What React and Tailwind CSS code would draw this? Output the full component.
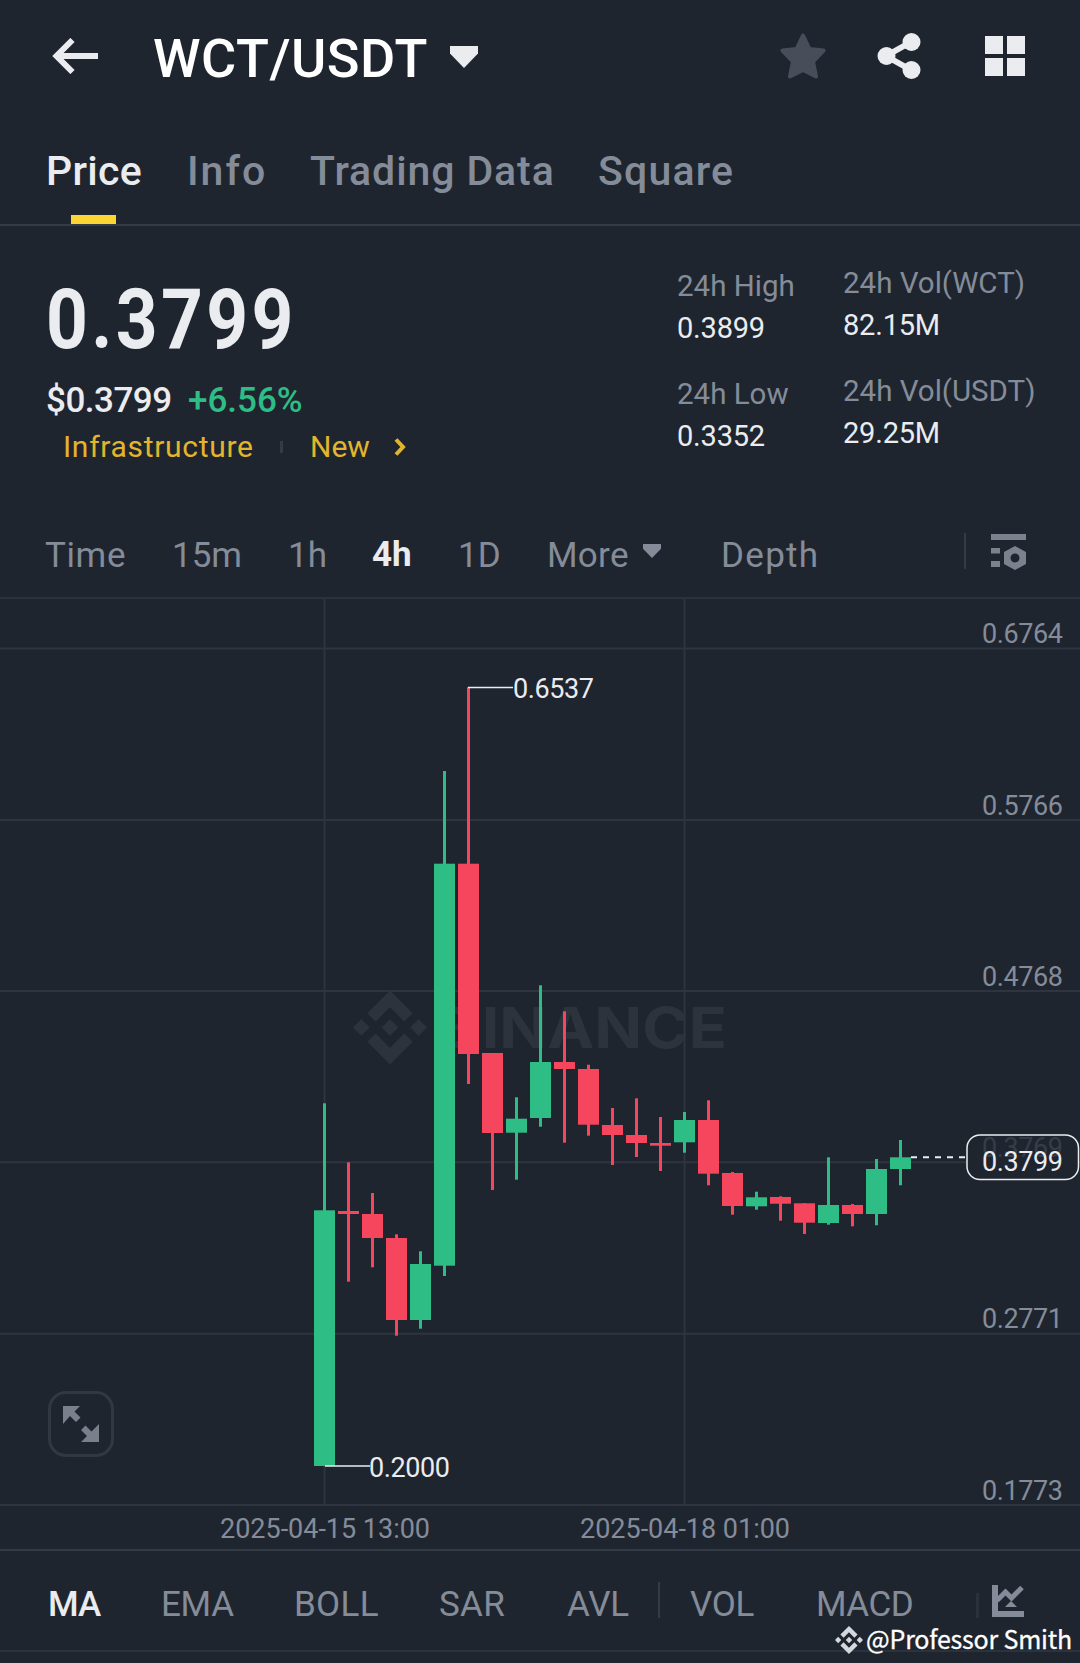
import { SiBinance } from "react-icons/si";

const UP = "#2ebd85";
const DOWN = "#f6465d";

// [high, bodyTop, bodyBottom, low, rising]
const candles = [
  [1103.3, 1210.3, 1466, 1466, true],
  [1162.3, 1211, 1214, 1281.7, false],
  [1193, 1214, 1238, 1267.3, false],
  [1234.3, 1238, 1320, 1335.7, false],
  [1251.3, 1264, 1320, 1328.7, true],
  [771, 863.7, 1265.7, 1276, true],
  [687.3, 863.7, 1054, 1084, false],
  [1053, 1053, 1133, 1190, false],
  [1097.3, 1118.7, 1132.7, 1179.7, true],
  [985.3, 1062, 1118, 1126.7, true],
  [1011.3, 1062, 1069, 1142.7, false],
  [1064.7, 1069, 1124.7, 1135.7, false],
  [1108, 1125, 1135, 1165, false],
  [1098.3, 1135, 1143, 1157, false],
  [1117, 1143, 1145.7, 1171, false],
  [1112, 1120, 1142.3, 1152.7, true],
  [1100.3, 1120, 1173.7, 1185.3, false],
  [1172, 1173, 1206, 1214.7, false],
  [1191.7, 1197.3, 1206.3, 1209.7, true],
  [1196.3, 1197, 1203.7, 1220.7, false],
  [1203.3, 1203.3, 1222.7, 1234, false],
  [1157.3, 1205, 1223, 1224.7, true],
  [1204, 1205, 1214, 1226.3, false],
  [1159, 1169, 1214, 1225.3, true],
  [1140, 1157.3, 1169, 1185.3, true],
];

const axis = [
  { y: 648.5, label: "0.6764" },
  { y: 820, label: "0.5766" },
  { y: 991, label: "0.4768" },
  { y: 1162.3, label: "0.3769", dim: true },
  { y: 1333.7, label: "0.2771" },
  { y: 1505, label: "0.1773" },
];

function Caret({ className }) {
  return (
    <svg className={className} viewBox="0 0 28 22" preserveAspectRatio="none" fill="currentColor">
      <path d="M0 0h28v7.5L14 22 0 7.5z" />
    </svg>
  );
}

function Header() {
  return (
    <header className="flex h-[112px] items-center text-[#eaecef]">
      <svg className="ml-[52px] h-9 w-[46px]" viewBox="0 0 46 36" fill="none" stroke="currentColor" strokeWidth="6">
        <path d="M46 18H5M20.500 2 4.500 18l16 16" />
      </svg>
      <h1 className="ml-[55px] w-[297px] pt-1.5 text-[54px] leading-[60px] font-medium tracking-[0.5px] whitespace-nowrap text-white">WCT/USDT</h1>
      <Caret className="mt-0.5 h-[22px] w-7" />
      <svg className="ml-[302px] h-[46px] w-[46px] text-[#474d59]" viewBox="0 0 46 46" fill="currentColor" stroke="currentColor" strokeWidth="4" strokeLinejoin="round">
        <path d="M23 2.500l6.500 13.500 14 1.500-10.500 11 3 15L23 37l-13 6.500 3-15-10.500-11 14-1.500z" />
      </svg>
      <svg className="ml-[51px] h-[46px] w-[44px]" viewBox="0 0 44 46" fill="currentColor">
        <path d="M34 9 9 23l25 14" fill="none" stroke="currentColor" strokeWidth="6" />
        <circle cx="34.500" cy="9" r="9" />
        <circle cx="9.500" cy="23" r="9" />
        <circle cx="34.500" cy="37" r="9" />
      </svg>
      <div className="ml-[64px] grid h-10 w-10 grid-cols-2 gap-1">
        <i className="bg-current" />
        <i className="bg-current" />
        <i className="bg-current" />
        <i className="bg-current" />
      </div>
    </header>
  );
}

function Tabs() {
  return (
    <nav className="flex h-[114px] border-b-2 border-[#333b47] pt-[29px] pl-[46px] text-[41px] leading-[60px] font-medium tracking-[0.9px] whitespace-nowrap text-[#858c99]">
      <div className="w-[141px]">
        <p className="tracking-[0.3px] text-[#eaecef]">Price</p>
        <div className="mt-[14px] ml-[25px] h-[9px] w-[45px] bg-[#fcd535]" />
      </div>
      <p className="w-[123px] tracking-[2px]">Info</p>
      <p className="w-[288px]">Trading Data</p>
      <p className="tracking-[1.200px]">Square</p>
    </nav>
  );
}

function Stat({ label, value }) {
  return (
    <div className="mb-[26px] leading-10 whitespace-nowrap">
      <p className="text-[29.5px] text-[#858c99]">{label}</p>
      <p className="mt-0.5 text-[29px] tracking-[-0.2px] text-[#eaecef]">{value}</p>
    </div>
  );
}

function Ticker() {
  return (
    <section className="flex h-[288px]">
      <div className="w-[677px] pt-[52px] pl-[46px]">
        <p className="origin-left scale-x-[0.88] text-[83px] leading-[84px] font-bold tracking-[3.800px] text-[#eaecef]">0.3799</p>
        <div className="mt-[19px] flex text-[35px] leading-10 font-medium">
          <span className="w-[142px] tracking-[-0.5px] text-[#eaecef]">$0.3799</span>
          <span className="text-[#2ebd85]">+6.56%</span>
        </div>
        <div className="mt-1.5 flex items-center pl-[17px] text-[30px] leading-10 text-[#e3b52c]">
          <span className="w-[217px] tracking-[0.7px]">Infrastructure</span>
          <i className="h-3 w-[3px] bg-[#333b47]" />
          <span className="ml-[27px] w-[84px]">New</span>
          <svg className="h-[18px] w-3" viewBox="0 0 12 18" fill="none" stroke="currentColor" strokeWidth="4">
            <path d="M2 1.500 9 9l-7 7.500" />
          </svg>
        </div>
      </div>
      <div className="w-[166px] pt-10">
        <Stat label="24h High" value="0.3899" />
        <Stat label="24h Low" value="0.3352" />
      </div>
      <div className="pt-[37px]">
        <Stat label="24h Vol(WCT)" value="82.15M" />
        <Stat label="24h Vol(USDT)" value="29.25M" />
      </div>
    </section>
  );
}

function Intervals() {
  return (
    <div className="flex h-[85px] items-center border-b-2 border-[#2a323d] pl-[45px] text-[35px] leading-10 whitespace-nowrap text-[#858c99]">
      <span className="w-[127px] tracking-[0.6px]">Time</span>
      <span className="w-[116px]">15m</span>
      <span className="w-[84px]">1h</span>
      <span className="mb-0.5 w-[86px] font-bold text-[#eaecef]">4h</span>
      <span className="w-[89px]">1D</span>
      <span className="w-[96px] tracking-[0.3px]">More</span>
      <Caret className="mb-2.5 h-[14px] w-[18px]" />
      <span className="ml-[60px] w-[243px] tracking-[1.300px]">Depth</span>
      <i className="mb-2.5 h-9 w-[2px] bg-[#333b47]" />
      <svg className="mb-2 ml-[25px] h-9 w-[35px] text-[#7b828e]" viewBox="0 0 35 36" fill="currentColor">
        <path d="M0 0h35v6H0zM0 14h9v5.500H0zM0 27h9v6H0z" />
        <path fillRule="evenodd" d="M24 12l11 6v12l-11 6-11-6V18zm0 7.500a4.500 4.500 0 1 0 0 9 4.500 4.500 0 0 0 0-9z" />
      </svg>
    </div>
  );
}

function Chart() {
  return (
    <div className="relative h-[952px] border-b-2 border-[#333b47]">
      <svg className="block h-[950px] w-[1080px] text-[27px]" viewBox="0 599 1080 950" fill="#858c99">
        {/* grid */}
        <g stroke="#2e3540" strokeWidth="2">
          {axis.map((a) => (
            <line key={a.label} x1="0" x2="1080" y1={a.y} y2={a.y} />
          ))}
          <line x1="324.500" x2="324.500" y1="599" y2="1505" />
          <line x1="684.500" x2="684.500" y1="599" y2="1505" />
        </g>

        {/* watermark */}
        <g fill="#2c333d">
          <SiBinance x="353" y="990.500" size={74} color="#2c333d" />
          <text x="440" y="1048" textLength="287" lengthAdjust="spacingAndGlyphs" className="font-[Inter] text-[57px] font-bold">BINANCE</text>
        </g>

        {axis.filter((a) => !a.dim).map((a) => (
          <text key={a.label} x="982" y={a.y - 5.5} textLength="81">{a.label}</text>
        ))}

        {candles.map(([high, top, bottom, low, rising], i) => (
          <g key={i} fill={rising ? UP : DOWN}>
            <rect x={323 + i * 24} y={high} width="3" height={low - high} />
            <rect x={314 + i * 24} y={top} width="21" height={bottom - top} />
          </g>
        ))}

        {/* high / low markers */}
        <g fill="#eaecef">
          <path d="M468 687.500h45M325 1466h45" stroke="#eaecef" strokeWidth="1.500" />
          <text x="513" y="698" textLength="81">0.6537</text>
          <text x="369" y="1477" textLength="81">0.2000</text>
        </g>

        {/* last price */}
        <path d="M911 1157.300h56" stroke="#eaecef" strokeWidth="2" strokeDasharray="6 6" />
        <rect x="967" y="1135" width="111.500" height="44.500" rx="13" fill="#1f252f" stroke="#eaecef" strokeWidth="1.500" />
        <text x="982" y="1157" textLength="81" fill="#363d48">0.3769</text>
        <text x="982" y="1171" textLength="81" fill="#eaecef">0.3799</text>

        <text x="220" y="1538" textLength="210">2025-04-15 13:00</text>
        <text x="580" y="1538" textLength="210">2025-04-18 01:00</text>
      </svg>
      <button className="absolute top-[792px] left-12 flex h-[66px] w-[66px] items-center justify-center rounded-[18px] border-3 border-[#303843] text-[#78808c]">
        <svg className="h-9 w-9" viewBox="0 0 36 36" fill="currentColor">
          <path d="M0 0h17l-5.500 5.500 6 6-4.500 4.500-6-6L0 18zM36 36H18l6-6-6-6 4.500-4.500 6 6L36 18z" />
        </svg>
      </button>
    </div>
  );
}

function Indicators() {
  return (
    <div className="flex h-[101px] items-center border-b-2 border-[#2a323d] pt-[9px] pl-12 text-[35px] leading-10 whitespace-nowrap text-[#858c99]">
      <span className="w-[113px] font-medium tracking-[-1px] text-[#eaecef]">MA</span>
      <span className="w-[133px] tracking-[-0.3px]">EMA</span>
      <span className="w-[145px] tracking-[0.3px]">BOLL</span>
      <span className="w-[128px] tracking-[0.3px]">SAR</span>
      <span className="w-[91px] tracking-[-0.2px]">AVL</span>
      <i className="mb-2.5 h-9 w-[2px] bg-[#333b47]" />
      <span className="ml-[30px] w-[126px] tracking-[-0.3px]">VOL</span>
      <span className="w-[160px] tracking-[-0.5px]">MACD</span>
      <i className="h-[25px] w-[3px] bg-[#2a313c]" />
      <svg className="mb-2 ml-[13px] h-8 w-8" viewBox="0 0 32 32" fill="currentColor">
        <path d="M0 0h6v26h26v6H0z" />
        <path d="M5 15.500l8.500-8.500 6 6L30 2.500" fill="none" stroke="currentColor" strokeWidth="5" />
        <path d="M19 16l6 6H13z" />
      </svg>
    </div>
  );
}

export default function App() {
  return (
    <div className="relative h-[1663px] w-[1080px] overflow-hidden bg-[#1f252f] font-[Roboto,sans-serif]">
      <Header />
      <Tabs />
      <Ticker />
      <Intervals />
      <Chart />
      <Indicators />
      <div className="absolute right-2 bottom-[9px] flex items-center gap-[3px] text-[25px] leading-8 font-normal text-white">
        <SiBinance className="mt-1 text-[#d5d8dc]" size={28} />
        <span className="font-['Noto_Sans_CJK_SC',sans-serif] tracking-[-0.2px] [-webkit-text-stroke:0.3px_white]">@Professor Smith</span>
      </div>
    </div>
  );
}
